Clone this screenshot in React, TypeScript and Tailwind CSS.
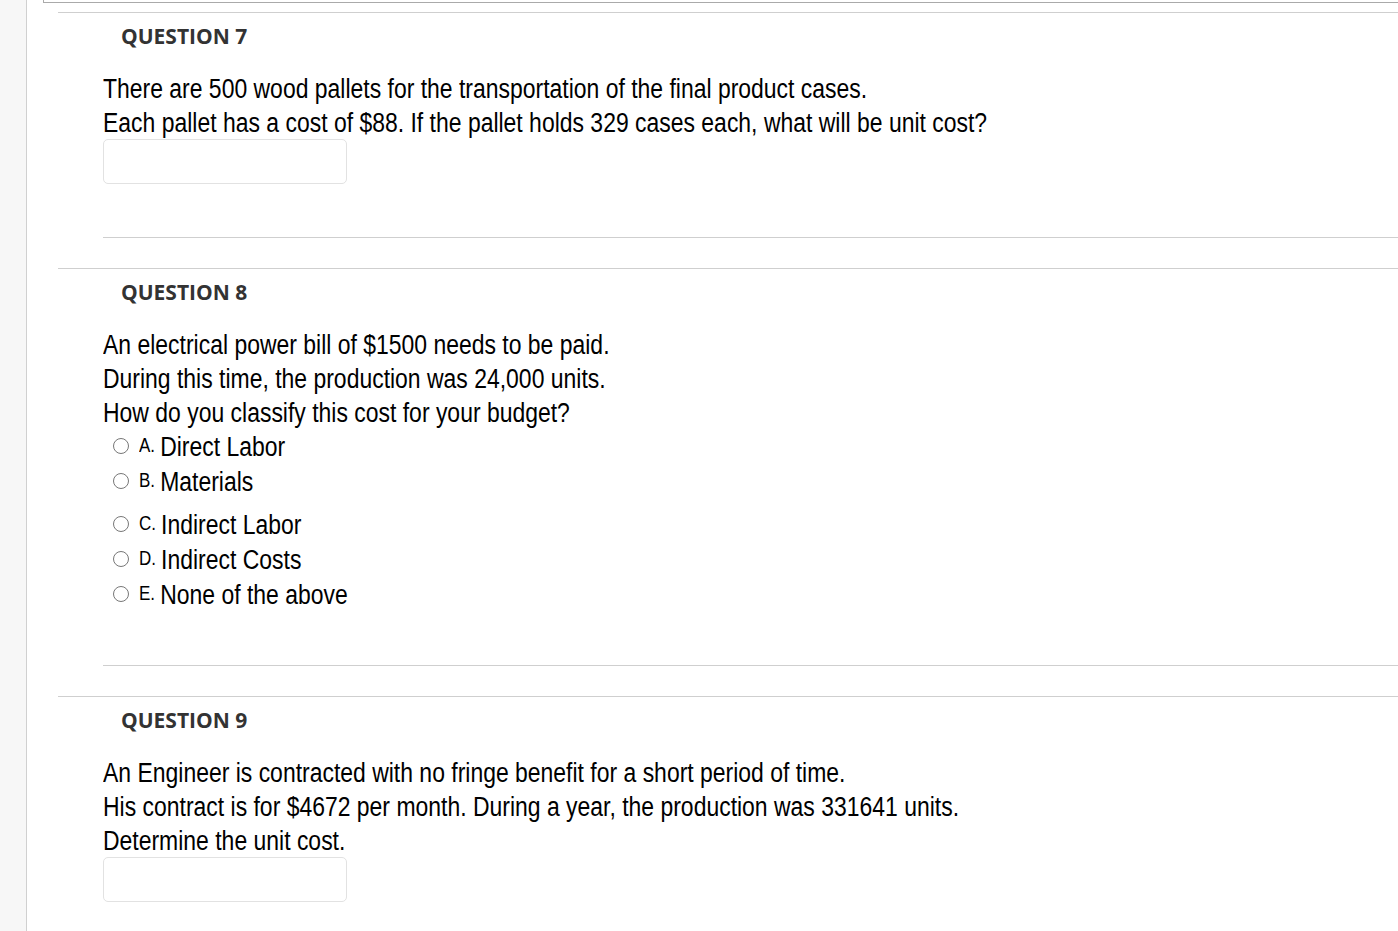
import React from "react";

// Arial Narrow is not installed, so Liberation Sans is squeezed to its width
const narrow = "font-['Liberation_Sans',Arial,sans-serif] inline-block origin-left scale-x-[0.85] whitespace-nowrap";

type Option = { key: string; label: string; gapBefore?: boolean };

function Heading({ text }: { text: string }) {
  return (
    <div className="pl-[94px] pt-[13px] h-[58px]">
      <div className="font-['Open_Sans',sans-serif] font-bold text-[21px] leading-[21px] text-[#333]">{text}</div>
    </div>
  );
}

function Lines({ lines }: { lines: string[] }) {
  return (
    <div className="text-[27px] leading-[34px] text-black">
      {lines.map((l) => (
        <div key={l} className="h-[34px]">
          <span className={narrow}>{l}</span>
        </div>
      ))}
    </div>
  );
}

function AnswerBox() {
  return <div className="w-[244px] h-[45px] border border-[#e2e2e2] rounded-[5px] bg-white" />;
}

function Radio({ opt }: { opt: Option }) {
  return (
    <div className={"flex items-start h-[35px] pt-[1px]" + (opt.gapBefore ? " mt-[8px]" : "")}>
      <span className="mt-[8px] ml-[10px] w-[16px] h-[16px] rounded-full border-[1.5px] border-[#777] bg-white shrink-0" />
      <span className={narrow + " ml-[10px]"}>
        <span className="flex items-start text-black">
          <span className="mt-[5px] text-[20px] leading-[20px]">{opt.key}.</span>
          <span className="ml-[6px] text-[27px] leading-[35px]">{opt.label}</span>
        </span>
      </span>
    </div>
  );
}

function Question({
  num,
  lines,
  options,
}: {
  num: number;
  lines: string[];
  options?: Option[];
}) {
  return (
    <section>
      <div className="ml-[31px] border-t border-[#cfcfcf]" />
      <Heading text={`QUESTION ${num}`} />
      <div className="pl-[76px]">
        <Lines lines={lines} />
        {options ? (
          <div>
            {options.map((o) => (
              <Radio key={o.key} opt={o} />
            ))}
          </div>
        ) : (
          <AnswerBox />
        )}
        <div className="mt-[53px] border-t border-[#cfcfcf] h-[31px]" />
      </div>
    </section>
  );
}

export default function App() {
  return (
    <div className="flex w-[1398px] h-[931px] overflow-hidden bg-white">
      {/* left rail */}
      <div className="w-[27px] shrink-0 bg-[#f7f7f7] border-r border-[#d0d0d0]" />

      <main className="flex-1">
        {/* tail of the previous block */}
        <div className="ml-[16px] h-[3px] border-l border-b border-[#aaa]" />
        <div className="h-[9px]" />

        <Question
          num={7}
          lines={[
            "There are 500 wood pallets for the transportation of the final product cases.",
            "Each pallet has a cost of $88. If the pallet holds 329 cases each, what will be unit cost?",
          ]}
        />
        <Question
          num={8}
          lines={[
            "An electrical power bill of $1500 needs to be paid.",
            "During this time, the production was 24,000 units.",
            "How do you classify this cost for your budget?",
          ]}
          options={[
            { key: "A", label: "Direct Labor" },
            { key: "B", label: "Materials" },
            { key: "C", label: "Indirect Labor", gapBefore: true },
            { key: "D", label: "Indirect Costs" },
            { key: "E", label: "None of the above" },
          ]}
        />
        <Question
          num={9}
          lines={[
            "An Engineer is contracted with no fringe benefit for a short period of time.",
            "His contract is for $4672 per month. During a year, the production was 331641 units.",
            "Determine the unit cost.",
          ]}
        />
      </main>
    </div>
  );
}
